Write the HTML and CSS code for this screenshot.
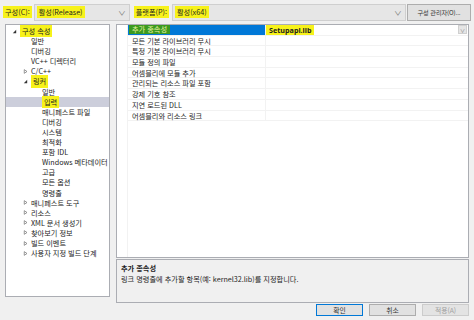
FILE: index.html
```html
<!DOCTYPE html>
<html lang="ko">
<head>
<meta charset="utf-8">
<link rel="stylesheet" href="styles.css">
</head>
<body>
<div class="dialog">
  <div class="topbar">
    <span class="lbl hl">구성(C):</span>
    <div class="select sel1"><span class="hl">활성(Release)</span><span class="chev">&#x2228;</span></div>
    <span class="lbl lbl2 hl">플랫폼(P):</span>
    <div class="select sel2"><span class="hl">활성(x64)</span><span class="chev">&#x2228;</span></div>
    <div class="btn mgr">구성 관리자(O)...</div>
  </div>
  <div class="main">
    <div class="tree">
      <div class="node l0"><svg class="arr" viewBox="0 0 6 6"><path d="M5 1 L5 5 L1 5 Z" fill="#333"/></svg><span class="hl">구성 속성</span></div>
      <div class="node l1">일반</div>
      <div class="node l1">디버깅</div>
      <div class="node l1">VC++ 디렉터리</div>
      <div class="node l1 c"><svg class="arr" viewBox="0 0 6 6"><path d="M1.5 0.8 L4.8 3 L1.5 5.2 Z" fill="none" stroke="#666" stroke-width="0.8"/></svg>C/C++</div>
      <div class="node l1 c"><svg class="arr" viewBox="0 0 6 6"><path d="M5 1 L5 5 L1 5 Z" fill="#333"/></svg><span class="hl">링커</span></div>
      <div class="node l2">일반</div>
      <div class="node l2 selected"><span class="hl">입력</span></div>
      <div class="node l2">매니페스트 파일</div>
      <div class="node l2">디버깅</div>
      <div class="node l2">시스템</div>
      <div class="node l2">최적화</div>
      <div class="node l2">포함 IDL</div>
      <div class="node l2">Windows 메타데이터</div>
      <div class="node l2">고급</div>
      <div class="node l2">모든 옵션</div>
      <div class="node l2">명령줄</div>
      <div class="node l1 c"><svg class="arr" viewBox="0 0 6 6"><path d="M1.5 0.8 L4.8 3 L1.5 5.2 Z" fill="none" stroke="#666" stroke-width="0.8"/></svg>매니페스트 도구</div>
      <div class="node l1 c"><svg class="arr" viewBox="0 0 6 6"><path d="M1.5 0.8 L4.8 3 L1.5 5.2 Z" fill="none" stroke="#666" stroke-width="0.8"/></svg>리소스</div>
      <div class="node l1 c"><svg class="arr" viewBox="0 0 6 6"><path d="M1.5 0.8 L4.8 3 L1.5 5.2 Z" fill="none" stroke="#666" stroke-width="0.8"/></svg>XML 문서 생성기</div>
      <div class="node l1 c"><svg class="arr" viewBox="0 0 6 6"><path d="M1.5 0.8 L4.8 3 L1.5 5.2 Z" fill="none" stroke="#666" stroke-width="0.8"/></svg>찾아보기 정보</div>
      <div class="node l1 c"><svg class="arr" viewBox="0 0 6 6"><path d="M1.5 0.8 L4.8 3 L1.5 5.2 Z" fill="none" stroke="#666" stroke-width="0.8"/></svg>빌드 이벤트</div>
      <div class="node l1 c"><svg class="arr" viewBox="0 0 6 6"><path d="M1.5 0.8 L4.8 3 L1.5 5.2 Z" fill="none" stroke="#666" stroke-width="0.8"/></svg>사용자 지정 빌드 단계</div>
    </div>
    <div class="right">
      <div class="grid">
        <div class="gutter"></div>
        <div class="rows">
          <div class="row first">
            <div class="name"><span class="hlg">추가 종속성</span></div>
            <div class="value"><span class="hl bold">Setupapi.lib</span><span class="ddbtn">&#x2228;</span></div>
          </div>
          <div class="row"><div class="name">모든 기본 라이브러리 무시</div><div class="value"></div></div>
          <div class="row"><div class="name">특정 기본 라이브러리 무시</div><div class="value"></div></div>
          <div class="row"><div class="name">모듈 정의 파일</div><div class="value"></div></div>
          <div class="row"><div class="name">어셈블리에 모듈 추가</div><div class="value"></div></div>
          <div class="row"><div class="name">관리되는 리소스 파일 포함</div><div class="value"></div></div>
          <div class="row"><div class="name">강제 기호 참조</div><div class="value"></div></div>
          <div class="row"><div class="name">지연 로드된 DLL</div><div class="value"></div></div>
          <div class="row"><div class="name">어셈블리와 리소스 링크</div><div class="value"></div></div>
        </div>
      </div>
      <div class="desc">
        <div class="desc-title">추가 종속성</div>
        <div class="desc-text">링크 명령줄에 추가할 항목(예: kernel32.lib)를 지정합니다.</div>
      </div>
    </div>
  </div>
  <div class="footer">
    <div class="btn ok">확인</div>
    <div class="btn">취소</div>
    <div class="btn disabled">적용(A)</div>
  </div>
</div>
</body>
</html>
```

FILE: styles.css
```css
html, body {
  margin: 0;
  padding: 0;
  background: #f0f0f0;
}
body {
  width: 474px;
  height: 320px;
  overflow: hidden;
  font-family: "Noto Sans CJK KR", "Noto Sans", sans-serif;
  font-size: 7.2px;
  color: #1e1e1e;
}
.dialog {
  display: flex;
  flex-direction: column;
  height: 320px;
}
.hl {
  background: #f7f21a;
  padding: 1px 2px;
}
.bold { font-weight: 700; font-family: "Noto Sans", "Noto Sans CJK KR", sans-serif; }

.topbar {
  display: flex;
  align-items: center;
  height: 18px;
  margin-top: 3px;
  padding-left: 3px;
}
.lbl { white-space: nowrap; }
.select {
  display: flex;
  align-items: center;
  justify-content: space-between;
  box-sizing: border-box;
  height: 17px;
  background: #e6e6e6;
  border: 1px solid #cfcfcf;
  padding: 0 4px 0 2px;
}
.sel1 { width: 96px; margin-left: 2px; }
.lbl2 { margin-left: 4px; }
.sel2 { width: 234px; margin-left: 3px; }
.chev { color: #777; font-size: 6px; transform: scaleX(1.3); }
.btn {
  box-sizing: border-box;
  display: flex;
  align-items: center;
  justify-content: center;
  background: #e1e1e1;
  border: 1px solid #adadad;
  color: #333;
  font-size: 6.8px;
  white-space: nowrap;
}
.mgr { width: 64px; height: 17px; margin-left: 1px; font-size: 6.2px; letter-spacing: -0.1px; }

.main {
  display: flex;
  margin-top: 3px;
  padding-left: 5px;
  gap: 6px;
}
.tree {
  box-sizing: border-box;
  width: 105px;
  height: 273px;
  background: #fff;
  border: 1px solid #abadb3;
  padding-top: 1px;
}
.node {
  height: 10.1px;
  line-height: 10.1px;
  white-space: nowrap;
  display: flex;
  align-items: center;
  color: #222;
}
.arr { width: 5px; height: 5px; margin-right: 3px; flex: none; }
.l0 { padding-left: 6px; }
.l1 { padding-left: 25px; }
.l1.c { padding-left: 17px; }
.l2 { padding-left: 36px; }
.selected { background: #cccedb; }

.right {
  width: 353px;
  display: flex;
  flex-direction: column;
  gap: 1px;
}
.grid {
  box-sizing: border-box;
  height: 234px;
  background: #fff;
  border: 1px solid #abadb3;
  display: flex;
}
.gutter {
  width: 10px;
  border-right: 1px solid #f2f2f2;
  flex: none;
}
.rows { flex: 1; display: flex; flex-direction: column; }
.row {
  display: flex;
  height: 10.7px;
  box-sizing: border-box;
  border-bottom: 1px solid #f2f2f2;
}
.name {
  width: 138px;
  box-sizing: border-box;
  padding-left: 4px;
  line-height: 10px;
  white-space: nowrap;
  border-right: 1px solid #f2f2f2;
}
.value {
  flex: 1;
  display: flex;
  align-items: center;
  justify-content: space-between;
}
.first .name {
  background: #0078d7;
  padding-left: 1px;
  display: flex;
  align-items: center;
}
.hlg {
  background: #3c9a20;
  color: #e8f5a0;
  padding: 0 3px;
  line-height: 9px;
}
.first .value .hl { padding: 0 3px 0 3px; line-height: 10px; }
.ddbtn {
  width: 9px;
  height: 9px;
  background: #e5e5e5;
  border: 1px solid #d0d0d0;
  box-sizing: border-box;
  color: #777;
  font-size: 5px;
  display: flex;
  align-items: center;
  justify-content: center;
  margin-right: 1px;
}
.desc {
  box-sizing: border-box;
  height: 44px;
  border: 1px solid #abadb3;
  background: #f0f0f0;
  padding: 3px 4px;
}
.desc-title { font-weight: 700; line-height: 11px; }
.desc-text { line-height: 11px; }

.footer {
  display: flex;
  justify-content: flex-end;
  gap: 6px;
  padding-right: 5px;
  margin-top: 1px;
}
.footer .btn { width: 47px; height: 12px; }
.footer .ok { border-color: #0078d7; }
.footer .disabled { color: #a0a0a0; background: #e3e3e3; border-color: #cccccc; }
```
